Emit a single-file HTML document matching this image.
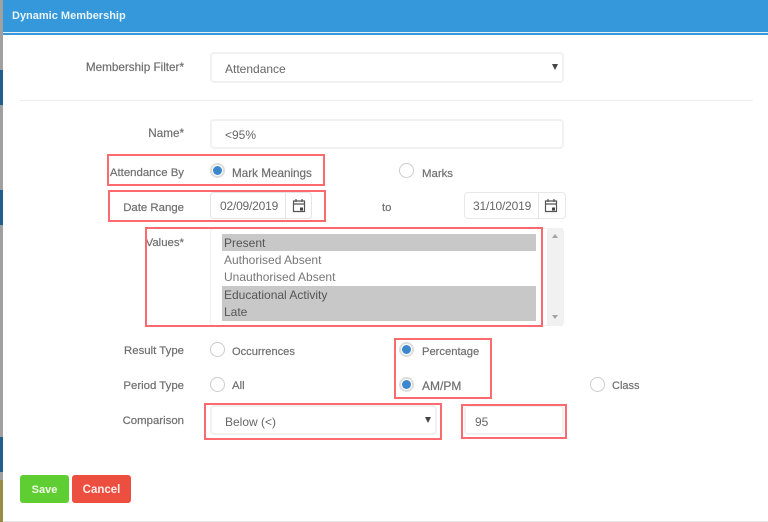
<!DOCTYPE html>
<html><head><meta charset="utf-8"><style>
html,body{margin:0;padding:0;width:768px;height:522px;overflow:hidden;background:#fff}
body{position:relative;font-family:"Liberation Sans",sans-serif;font-size:12px;color:#666;filter:blur(.3px)}
.a{position:absolute;box-sizing:border-box}
.t{position:absolute;white-space:nowrap;line-height:16px}
.l{font-weight:400;color:#6f6f6f;text-align:right;-webkit-text-stroke:.2px #6f6f6f;font-size:11.4px}
.b{border:2px solid #f1f1f1;border-radius:4px;background:#fff}
.r{border:2px solid #fb6a6e;background:transparent}
.rad{width:15px;height:15px;border:1px solid #ccc;border-radius:50%;background:#fff;position:absolute;box-sizing:border-box}
.rad.on{border:2px solid #ddd}
.rad.on::after{content:"";position:absolute;left:1px;top:1px;width:9px;height:9px;border-radius:50%;background:#3a87cd}
.arrow{position:absolute;width:0;height:0;border-left:3.5px solid transparent;border-right:3.5px solid transparent;border-top:6px solid #444}
.sel{background:#c8c8c8}
</style></head><body>
<div class="a" style="left:0;top:0;width:3px;height:522px;background:#a0a0a0"></div>
<div class="a" style="left:0;top:70px;width:3px;height:35px;background:#225f8f"></div>
<div class="a" style="left:0;top:190px;width:3px;height:35px;background:#225f8f"></div>
<div class="a" style="left:0;top:437px;width:3px;height:35px;background:#225f8f"></div>
<div class="a" style="left:0;top:480px;width:3px;height:42px;background:#9c8b45"></div>

<div class="a" style="left:3px;top:0;width:765px;height:35px;background:#3498db"></div>
<div class="a" style="left:3px;top:32px;width:765px;height:1px;background:#e6f0f7"></div>
<div class="t" style="left:12px;top:8px;color:#e9f4fb;font-weight:700;font-size:11px">Dynamic Membership</div>
<div class="a" style="left:3px;top:521px;width:765px;height:1px;background:#e4e4e4"></div>

<div class="t l" style="right:584px;top:60px;font-size:11.7px">Membership Filter*</div>
<div class="a b" style="left:210px;top:52px;width:354px;height:31px"></div>
<div class="t" style="left:225px;top:61px">Attendance</div>
<div class="arrow" style="left:552px;top:64px"></div>
<div class="a" style="left:20px;top:100px;width:733px;height:1px;background:#eee"></div>

<div class="t l" style="right:584px;top:126px;font-size:11.7px">Name*</div>
<div class="a b" style="left:210px;top:119px;width:354px;height:30px"></div>
<div class="t" style="left:225px;top:127px">&lt;95%</div>

<div class="t l" style="right:584px;top:165px">Attendance By</div>
<div class="rad on" style="left:210px;top:163px"></div>
<div class="t l" style="left:232px;top:166px;font-size:11.7px">Mark Meanings</div>
<div class="rad" style="left:399px;top:163px"></div>
<div class="t l" style="left:422px;top:166px">Marks</div>

<div class="t l" style="right:584px;top:200px">Date Range</div>
<div class="a" style="left:210px;top:192px;width:102px;height:27px;border:1px solid #e4e4e4;border-radius:4px"></div>
<div class="a" style="left:285px;top:192px;width:1px;height:27px;background:#e4e4e4"></div>
<div class="t" style="left:220px;top:198px;letter-spacing:-.2px">02/09/2019</div>
<svg class="a" style="left:292px;top:198px" width="14" height="15" viewBox="0 0 14 15"><path d="M1.500 3h11v10.500h-11zM1.500 6h11M4 1v3M10 1v3" fill="none" stroke="#555" stroke-width="1.200"/><rect x="8" y="9.500" width="3" height="3" fill="#444"/></svg>
<div class="t l" style="left:382px;top:200px">to</div>
<div class="a" style="left:464px;top:192px;width:102px;height:27px;border:1px solid #e8e8e8;border-radius:4px"></div>
<div class="a" style="left:538px;top:192px;width:1px;height:27px;background:#e4e4e4"></div>
<div class="t" style="left:473px;top:198px;letter-spacing:-.2px">31/10/2019</div>
<svg class="a" style="left:544px;top:198px" width="14" height="15" viewBox="0 0 14 15"><path d="M1.500 3h11v10.500h-11zM1.500 6h11M4 1v3M10 1v3" fill="none" stroke="#555" stroke-width="1.200"/><rect x="8" y="9.500" width="3" height="3" fill="#444"/></svg>

<div class="t l" style="right:584px;top:235px">Values*</div>
<div class="a" style="left:210px;top:228px;width:354px;height:98px;border:1px solid #f0f0f0;border-radius:4px"></div>
<div class="a sel" style="left:222px;top:234px;width:314px;height:17px"></div>
<div class="a sel" style="left:222px;top:286px;width:314px;height:35px"></div>
<div class="t" style="left:224px;top:235px;color:#555">Present</div>
<div class="t" style="left:224px;top:252px;color:#777">Authorised Absent</div>
<div class="t" style="left:224px;top:269px;color:#777">Unauthorised Absent</div>
<div class="t" style="left:224px;top:287px;color:#555">Educational Activity</div>
<div class="t" style="left:224px;top:304px;color:#555">Late</div>
<div class="a" style="left:547px;top:228px;width:16px;height:98px;background:#f1f1f1"></div>
<div class="a" style="left:552px;top:234px;width:0;height:0;border-left:3.500px solid transparent;border-right:3.500px solid transparent;border-bottom:4px solid #a3a3a3"></div>
<div class="a" style="left:552px;top:315px;width:0;height:0;border-left:3.500px solid transparent;border-right:3.500px solid transparent;border-top:4px solid #a3a3a3"></div>

<div class="t l" style="right:584px;top:343px">Result Type</div>
<div class="rad" style="left:210px;top:342px"></div>
<div class="t l" style="left:232px;top:344px;font-size:11.1px">Occurrences</div>
<div class="rad on" style="left:399px;top:342px"></div>
<div class="t l" style="left:422px;top:344px;font-size:11.2px">Percentage</div>

<div class="t l" style="right:584px;top:378px">Period Type</div>
<div class="rad" style="left:210px;top:377px"></div>
<div class="t l" style="left:232px;top:378px">All</div>
<div class="rad on" style="left:399px;top:377px"></div>
<div class="t l" style="left:422px;top:378px;font-size:12px">AM/PM</div>
<div class="rad" style="left:590px;top:377px"></div>
<div class="t l" style="left:612px;top:378px;font-size:11px">Class</div>

<div class="t l" style="right:584px;top:413px">Comparison</div>
<div class="a b" style="left:210px;top:405px;width:227px;height:30px"></div>
<div class="t" style="left:225px;top:414px">Below (&lt;)</div>
<div class="arrow" style="left:425px;top:417px"></div>
<div class="a b" style="left:464px;top:405px;width:100px;height:30px"></div>
<div class="t" style="left:475px;top:414px">95</div>

<div class="a r" style="left:107px;top:154px;width:218px;height:32px"></div>
<div class="a r" style="left:108px;top:190px;width:218px;height:32px"></div>
<div class="a r" style="left:145px;top:227px;width:398px;height:100px"></div>
<div class="a r" style="left:394px;top:338px;width:98px;height:61px"></div>
<div class="a r" style="left:204px;top:403px;width:238px;height:37px"></div>
<div class="a r" style="left:461px;top:404px;width:106px;height:35px"></div>

<div class="a" style="left:20px;top:475px;width:49px;height:28px;background:#5fce32;border-radius:3px;color:#f2fbe9;font-weight:700;font-size:11px;text-align:center;line-height:30px">Save</div>
<div class="a" style="left:72px;top:475px;width:59px;height:28px;background:#ec4f40;border-radius:3px;color:#fdecea;font-weight:700;font-size:11.500px;text-align:center;line-height:30px">Cancel</div>
</body></html>
